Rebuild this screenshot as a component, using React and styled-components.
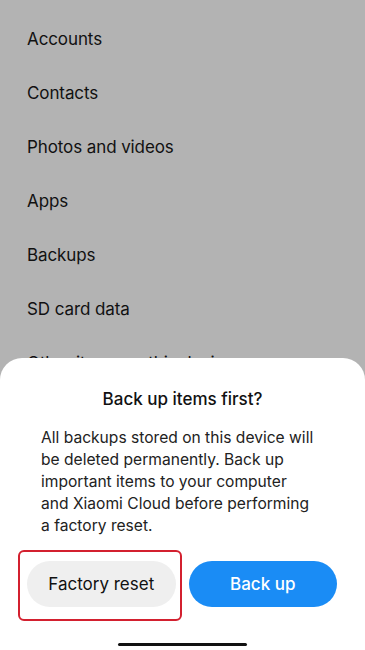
import styled, { createGlobalStyle } from 'styled-components';

const GlobalStyle = createGlobalStyle`
  html, body {
    margin: 0;
    padding: 0;
    background: #b3b3b3;
  }
  body {
    font-family: Inter, "Noto Sans", sans-serif;
    -webkit-font-smoothing: antialiased;
  }
`;

const Screen = styled.div`
  position: relative;
  width: 365px;
  height: 650px;
  overflow: hidden;
  background: #b3b3b3;
`;

const List = styled.ul`
  list-style: none;
  margin: 0;
  padding: 12px 0 0 27px;
`;

const Item = styled.li`
  height: 54px;
  display: flex;
  align-items: center;
  font-size: 17px;
  color: #111;
  letter-spacing: -0.1px;
`;

const Sheet = styled.div`
  position: absolute;
  left: 0;
  right: 0;
  bottom: 0;
  height: 292px;
  background: #fff;
  border-radius: 22px 22px 0 0;
  display: flex;
  flex-direction: column;
  align-items: center;
`;

const Title = styled.h2`
  margin: 31px 0 0;
  font-size: 17px;
  font-weight: 500;
  color: #111;
`;

const Body = styled.p`
  margin: 18px 0 0;
  padding: 0 47px 0 41px;
  font-size: 15.6px;
  line-height: 22px;
  color: #222;
`;

const Actions = styled.div`
  display: grid;
  grid-template-columns: minmax(0, 1fr) minmax(0, 1fr);
  gap: 13px;
  margin-top: 24px;
  padding: 0 28px 0 27px;
  width: 100%;
  box-sizing: border-box;
`;

const Highlight = styled.div`
  position: relative;
  display: flex;
  &::after {
    content: '';
    position: absolute;
    left: -9px;
    right: -6px;
    top: -11px;
    bottom: -14px;
    border: 2px solid #d3202f;
    border-radius: 6px;
    pointer-events: none;
  }
`;

const Button = styled.button`
  flex: 1;
  height: 46px;
  padding: 0;
  border: none;
  border-radius: 23px;
  font-family: inherit;
  font-size: 17px;
  font-weight: ${p => (p.$primary ? 500 : 400)};
  background: ${p => (p.$primary ? '#1a8cf5' : '#efefef')};
  color: ${p => (p.$primary ? '#fff' : '#111')};
`;

const HomeBar = styled.div`
  position: absolute;
  bottom: 4px;
  left: 118px;
  width: 129px;
  height: 3px;
  border-radius: 2px;
  background: #111;
`;

const items = [
  'Accounts',
  'Contacts',
  'Photos and videos',
  'Apps',
  'Backups',
  'SD card data',
  'Other items on this device',
];

export default function App() {
  return (
    <Screen>
      <GlobalStyle />
      <List>
        {items.map(label => (
          <Item key={label}>{label}</Item>
        ))}
      </List>
      <Sheet>
        <Title>Back up items first?</Title>
        <Body>
          All backups stored on this device will be deleted permanently. Back up
          important items to your computer and Xiaomi Cloud before performing a
          factory reset.
        </Body>
        <Actions>
          <Highlight>
            <Button>Factory reset</Button>
          </Highlight>
          <Button $primary>Back up</Button>
        </Actions>
        <HomeBar />
      </Sheet>
    </Screen>
  );
}
